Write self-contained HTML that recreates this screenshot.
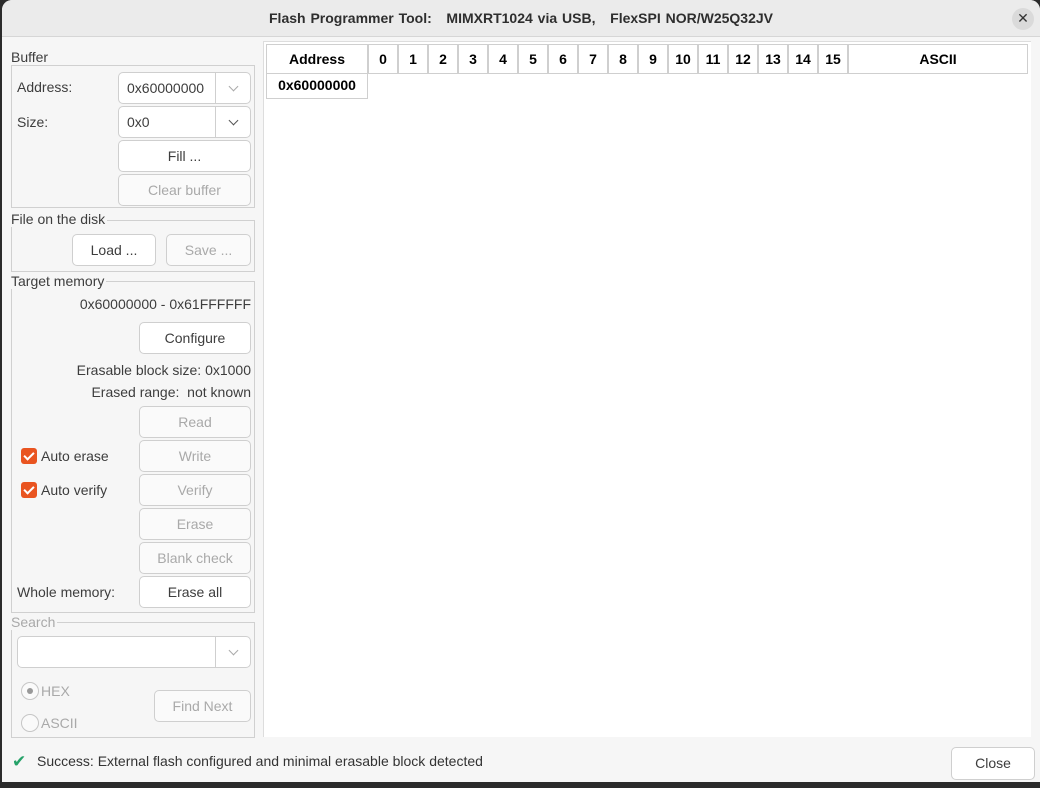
<!DOCTYPE html><html><head><style>
*{box-sizing:border-box;margin:0;padding:0}
body{width:1040px;height:788px;background:#2b2b2b;font-family:"Liberation Sans","DejaVu Sans",sans-serif;font-size:14px;color:#3d3d3d;position:relative;overflow:hidden}
.win{position:absolute;left:2px;top:0;width:1038px;height:782px;background:#f6f6f6;border-radius:10px 10px 0 0;overflow:hidden}
.title{position:absolute;left:0;top:0;width:100%;height:37px;background:#ebebeb;border-bottom:1px solid #d6d6d6;text-align:center;line-height:37px;font-weight:bold;font-size:14px;color:#2e2e2e;word-spacing:1px}
.x{position:absolute;right:6px;top:8px;width:22px;height:22px;border-radius:50%;background:#dadada;text-align:center;line-height:21px;font-size:14px;color:#333}
.a{position:absolute}
.gb{position:absolute;border:1px solid #d0d0d0;left:9px;width:244px}
.gt{position:absolute;left:9px;background:#f6f6f6;padding-right:2px;line-height:16px}
.btn{position:absolute;background:#fff;border:1px solid #cfcfcf;border-radius:5px;text-align:center;line-height:30px;height:32px}
.dis{color:#a9a9a9;background:#fafafa}
.cb{position:absolute;background:#fff;border:1px solid #cfcfcf;border-radius:5px;height:32px;line-height:30px;padding-left:8px}
.cb i{position:absolute;right:0;top:0;width:35px;height:30px;border-left:1px solid #cfcfcf}
.cb i:after{content:"";position:absolute;left:14px;top:10px;width:6px;height:6px;border-right:1.3px solid #555;border-bottom:1.3px solid #555;transform:rotate(45deg)}
.cb i.l:after{border-color:#aaa}
.chk{position:absolute;width:16px;height:16px;background:#e95420;border-radius:3px}
.chk:after{content:"";position:absolute;left:5px;top:2px;width:4px;height:8px;border-right:2px solid #fff;border-bottom:2px solid #fff;transform:rotate(45deg)}
.rad{position:absolute;width:18px;height:18px;border:1px solid #c6c6c6;border-radius:50%;background:#fafafa}
.tbl{position:absolute;left:261px;top:41px;width:768px;height:696px;background:#fff;border-left:1px solid #ddd;border-top:1px solid #ddd}
.hc{position:absolute;top:2px;height:30px;border:1px solid #cfcfcf;font-weight:bold;color:#000;text-align:center;line-height:28px;font-size:14px}
.r{text-align:right}
</style></head><body>
<div class="win">
<div class="title">Flash Programmer Tool:&nbsp;&nbsp; MIMXRT1024 via USB,&nbsp;&nbsp; FlexSPI NOR/W25Q32JV</div>
<div class="x">✕</div>

<div class="gb" style="top:65px;height:143px"></div><div class="gt" style="top:49px">Buffer</div>
<div class="a" style="left:15px;top:79px">Address:</div>
<div class="cb" style="left:116px;top:72px;width:133px">0x60000000<i class="l"></i></div>
<div class="a" style="left:15px;top:114px">Size:</div>
<div class="cb" style="left:116px;top:106px;width:133px">0x0<i></i></div>
<div class="btn" style="left:116px;top:140px;width:133px">Fill ...</div>
<div class="btn dis" style="left:116px;top:174px;width:133px">Clear buffer</div>

<div class="gb" style="top:220px;height:52px"></div><div class="gt" style="top:211px">File on the disk</div>
<div class="btn" style="left:70px;top:234px;width:84px">Load ...</div>
<div class="btn dis" style="left:164px;top:234px;width:85px">Save ...</div>

<div class="gb" style="top:281px;height:332px"></div><div class="gt" style="top:273px">Target memory</div>
<div class="a r" style="right:789px;top:296px">0x60000000 - 0x61FFFFFF</div>
<div class="btn" style="left:137px;top:322px;width:112px">Configure</div>
<div class="a r" style="right:789px;top:362px">Erasable block size: 0x1000</div>
<div class="a r" style="right:789px;top:384px">Erased range:&nbsp; not known</div>
<div class="btn dis" style="left:137px;top:406px;width:112px">Read</div>
<div class="btn dis" style="left:137px;top:440px;width:112px">Write</div>
<div class="btn dis" style="left:137px;top:474px;width:112px">Verify</div>
<div class="btn dis" style="left:137px;top:508px;width:112px">Erase</div>
<div class="btn dis" style="left:137px;top:542px;width:112px">Blank check</div>
<div class="btn" style="left:137px;top:576px;width:112px">Erase all</div>
<div class="chk" style="left:19px;top:448px"></div><div class="a" style="left:39px;top:448px">Auto erase</div>
<div class="chk" style="left:19px;top:482px"></div><div class="a" style="left:39px;top:482px">Auto verify</div>
<div class="a" style="left:15px;top:584px">Whole memory:</div>

<div class="gb" style="top:622px;height:116px"></div><div class="gt" style="top:614px;color:#a9a9a9">Search</div>
<div class="cb" style="left:15px;top:636px;width:234px"><i class="l"></i></div>
<div class="rad" style="left:19px;top:682px"><div style="position:absolute;left:5px;top:5px;width:6px;height:6px;border-radius:50%;background:#999"></div></div>
<div class="a" style="left:39px;top:683px;color:#a9a9a9">HEX</div>
<div class="rad" style="left:19px;top:714px"></div>
<div class="a" style="left:39px;top:715px;color:#a9a9a9">ASCII</div>
<div class="btn dis" style="left:152px;top:690px;width:97px">Find Next</div>

<div class="tbl">
<div class="hc" style="left:2px;width:102px">Address</div>
<div class="hc" style="left:104px;width:30px">0</div><div class="hc" style="left:134px;width:30px">1</div><div class="hc" style="left:164px;width:30px">2</div><div class="hc" style="left:194px;width:30px">3</div><div class="hc" style="left:224px;width:30px">4</div><div class="hc" style="left:254px;width:30px">5</div><div class="hc" style="left:284px;width:30px">6</div><div class="hc" style="left:314px;width:30px">7</div><div class="hc" style="left:344px;width:30px">8</div><div class="hc" style="left:374px;width:30px">9</div><div class="hc" style="left:404px;width:30px">10</div><div class="hc" style="left:434px;width:30px">11</div><div class="hc" style="left:464px;width:30px">12</div><div class="hc" style="left:494px;width:30px">13</div><div class="hc" style="left:524px;width:30px">14</div><div class="hc" style="left:554px;width:30px">15</div>
<div class="hc" style="left:584px;width:180px">ASCII</div>
<div class="hc" style="left:2px;top:32px;width:102px;height:25px;line-height:23px;border-top:none">0x60000000</div>
</div>

<div class="a" style="left:10px;top:752px;color:#26a269;font-size:17px;font-weight:bold">✔</div>
<div class="a" style="left:35px;top:753px;color:#333">Success: External flash configured and minimal erasable block detected</div>
<div class="btn" style="left:949px;top:747px;width:84px;height:33px;line-height:31px">Close</div>
</div>
</body></html>
